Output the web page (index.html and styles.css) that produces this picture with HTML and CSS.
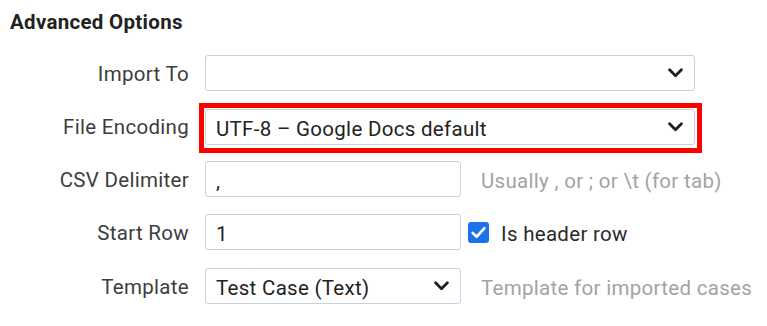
FILE: index.html
```html
<!DOCTYPE html>
<html>
<head>
<meta charset="utf-8">
<link rel="stylesheet" href="styles.css">
</head>
<body>
<div class="panel">
  <h2 class="title">Advanced Options</h2>
  <div class="form">
    <div class="label">Import To</div>
    <div class="field">
      <div class="select wide"><span class="value"></span><svg class="chev" viewBox="0 0 14 9"><path d="M1.5 1.5 L7 7 L12.5 1.5"/></svg></div>
    </div>

    <div class="label">File Encoding</div>
    <div class="field">
      <div class="select wide highlight"><span class="value">UTF-8 – Google Docs default</span><svg class="chev" viewBox="0 0 14 9"><path d="M1.5 1.5 L7 7 L12.5 1.5"/></svg></div>
    </div>

    <div class="label">CSV Delimiter</div>
    <div class="field">
      <div class="input"><span class="value">,</span></div>
      <span class="hint">Usually , or ; or \t (for tab)</span>
    </div>

    <div class="label">Start Row</div>
    <div class="field">
      <div class="input"><span class="value">1</span></div>
      <span class="check"><svg viewBox="0 0 20 20"><path d="M4.5 10.5 L8.3 14 L15.5 6"/></svg></span>
      <span class="checklabel">Is header row</span>
    </div>

    <div class="label last">Template</div>
    <div class="field last">
      <div class="select narrow"><span class="value">Test Case (Text)</span><svg class="chev" viewBox="0 0 14 9"><path d="M1.5 1.5 L7 7 L12.5 1.5"/></svg></div>
      <span class="hint">Template for imported cases</span>
    </div>
  </div>
</div>
</body>
</html>
```
FILE: styles.css
```css
html, body {
  margin: 0;
  padding: 0;
  background: #ffffff;
}
body {
  font-family: Roboto, "Liberation Sans", sans-serif;
  color: #3a3a3a;
  letter-spacing: 0.3px;
}
.panel {
  padding: 10px 0 0 10px;
}
.title {
  margin: 0;
  font-size: 20.5px;
  font-weight: 700;
  line-height: 24px;
  color: #222;
}
.form {
  margin-top: 21px;
  display: grid;
  grid-template-columns: 179px 1fr;
  column-gap: 16px;
  row-gap: 17px;
}
.label {
  font-size: 20.5px;
  text-align: right;
  height: 36px;
  line-height: 38px;
  color: #3d3d3d;
  white-space: nowrap;
}
.field {
  display: flex;
  align-items: center;
  height: 36px;
}
.last {
  margin-top: 1px;
}
.select, .input {
  box-sizing: border-box;
  height: 36px;
  border: 1px solid #c2d3e4;
  border-radius: 3px;
  display: flex;
  align-items: center;
  padding: 0 10px;
  font-size: 20.5px;
  color: #222;
  background: #fff;
  position: relative;
}
.wide { width: 490px; }
.narrow { width: 256px; }
.input { width: 256px; }
.value {
  flex: 1;
  white-space: nowrap;
  padding-top: 3px;
}
.chev {
  width: 15px;
  height: 10px;
  margin-right: 1px;
  fill: none;
  stroke: #1e1e1e;
  stroke-width: 2.6;
  stroke-linecap: round;
  stroke-linejoin: round;
}
.highlight {
  margin-top: 2px;
}
.highlight::after {
  content: "";
  position: absolute;
  left: -7px;
  top: -7px;
  right: -8px;
  bottom: -9px;
  border: 5px solid #ff0000;
  pointer-events: none;
}
.hint {
  margin-left: 20px;
  padding-top: 3px;
  font-size: 20.5px;
  color: #a3a3a3;
  white-space: nowrap;
}
.check {
  margin-left: 7px;
  width: 21px;
  height: 21px;
  border-radius: 3px;
  background: #1a73e8;
  display: flex;
}
.check svg {
  width: 21px;
  height: 21px;
  fill: none;
  stroke: #fff;
  stroke-width: 2.6;
  stroke-linecap: round;
  stroke-linejoin: round;
}
.checklabel {
  margin-left: 12px;
  padding-top: 3px;
  font-size: 20.5px;
  color: #2a2a2a;
}
```
